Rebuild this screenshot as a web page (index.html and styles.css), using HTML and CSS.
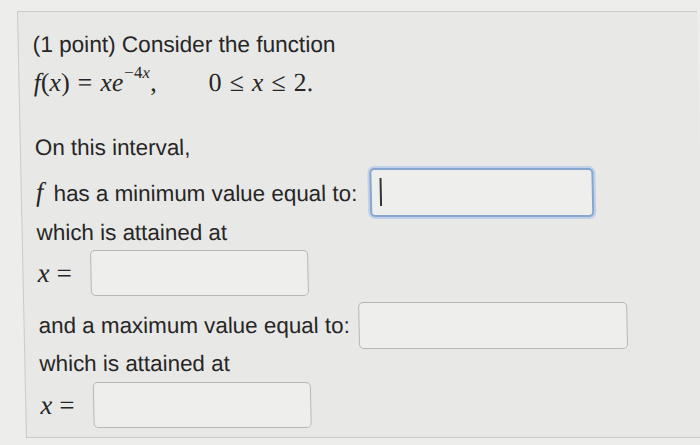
FILE: index.html
```html
<!DOCTYPE html>
<html>
<head>
<meta charset="utf-8">
<link rel="stylesheet" href="styles.css">
</head>
<body>
<div class="panel">
  <p class="intro">(1 point) Consider the function</p>
  <p class="math"><i>f</i>(<i>x</i>)<span class="op">=</span><i>xe</i><sup>−4<i>x</i></sup>,<span class="gap"></span>0<span class="op">≤</span><i>x</i><span class="op">≤</span>2.</p>
  <p class="line interval">On this interval,</p>
  <div class="row min">
    <span class="label"><i class="mf">f</i> has a minimum value equal to:</span>
    <span class="input focused"><span class="caret"></span></span>
  </div>
  <p class="line att1">which is attained at</p>
  <div class="row xrow1">
    <span class="mx"><i>x</i><span class="eq">=</span></span>
    <span class="input xin"></span>
  </div>
  <div class="row max">
    <span class="label">and a maximum value equal to:</span>
    <span class="input maxin"></span>
  </div>
  <p class="line att2">which is attained at</p>
  <div class="row xrow2">
    <span class="mx"><i>x</i><span class="eq">=</span></span>
    <span class="input xin"></span>
  </div>
</div>
</body>
</html>
```
FILE: styles.css
```css
html, body {
  margin: 0;
  padding: 0;
}
body {
  width: 700px;
  height: 445px;
  overflow: hidden;
  background: #ededeb;
  font-family: "Liberation Sans", Arial, sans-serif;
  color: #262626;
}
.panel {
  margin: 11px 0 0 17px;
  width: 680px;
  height: 427px;
  box-sizing: border-box;
  border: 1px solid #cbcbc7;
  border-right: none;
  background: #e8e8e6;
  padding: 20px 0 0 14px;
  transform: skewX(1.2deg);
  transform-origin: top left;
}
p {
  margin: 0;
}
.intro {
  font-size: 22.6px;
  line-height: 25px;
}
.math {
  font-family: "Liberation Serif", "Times New Roman", serif;
  font-size: 26px;
  line-height: 36px;
  padding-top: 8px;
}
.math i {
  font-style: italic;
}
.math .op {
  margin: 0 8px;
}
.math sup {
  font-size: 17px;
  vertical-align: baseline;
  line-height: 0;
  position: relative;
  top: -13px;
  margin-left: 1px;
}
.math .gap {
  display: inline-block;
  width: 52px;
}
.line {
  font-size: 22.4px;
  line-height: 25px;
}
.interval {
  margin-top: 34px;
}
.row {
  display: flex;
  align-items: center;
  font-size: 22.4px;
}
.label {
  line-height: 25px;
}
.mf {
  font-family: "Liberation Serif", "Times New Roman", serif;
  font-size: 27px;
  margin-right: 4px;
}
.input {
  display: block;
  box-sizing: border-box;
  border: 1px solid #b7b7b3;
  border-radius: 5px;
  background: #eeeeec;
}
.focused {
  width: 224px;
  height: 49px;
  border: 2px solid #86a6cf;
  box-shadow: 0 0 0 2px rgba(150, 188, 235, 0.5);
  margin-left: 13px;
  position: relative;
}
.caret {
  position: absolute;
  left: 8px;
  top: 8px;
  width: 2px;
  height: 28px;
  background: #333;
}
.min {
  margin-top: 8px;
}
.att1 {
  margin-top: 3px;
}
.xrow1 {
  margin-top: 5px;
}
.mx {
  font-family: "Liberation Serif", "Times New Roman", serif;
  font-size: 27px;
  width: 53px;
  display: flex;
  align-items: center;
}
.mx i {
  font-style: italic;
}
.mx .eq {
  margin-left: 7px;
}
.xin {
  width: 218px;
  height: 46px;
}
.max {
  margin-top: 6px;
}
.maxin {
  width: 269px;
  height: 47px;
  margin-left: 9px;
}
.att2 {
  margin-top: 2px;
}
.xrow2 {
  margin-top: 6px;
}
```
